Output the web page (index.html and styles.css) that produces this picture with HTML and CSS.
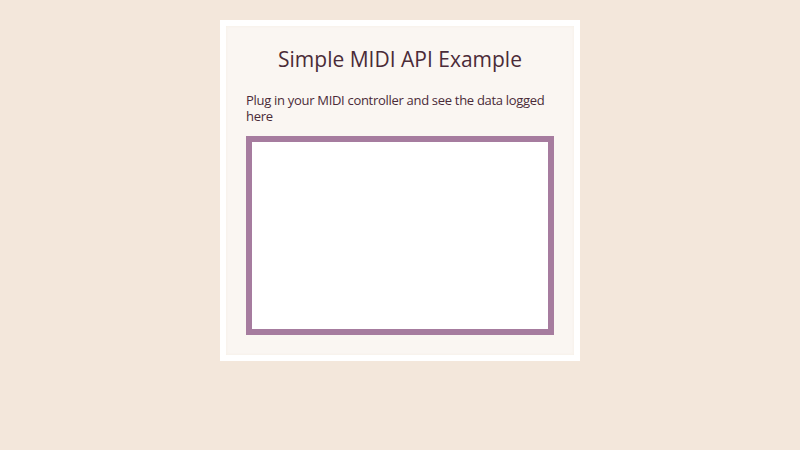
FILE: index.html
```html
<!DOCTYPE html>
<html lang="en">
<head>
    <meta charset="UTF-8">
    <meta name="viewport" content="width=device-width, initial-scale=1.0">
    <title>Simple MIDI API Example</title>
    <link rel="stylesheet" href="styles.css">
</head>
<body>
    <div class="wrapper">
        <h1>Simple MIDI API Example</h1>
        <p>Plug in your MIDI controller and see the data logged here</p>
        <div class="output" id="output"></div>
    </div>
</body>
</html>
```

FILE: styles.css
```css
body {
    font-family: "Open Sans", Arial, sans-serif;
    background-color: #f3e7db;
    color: #4a2b38;
    margin: 0;
    padding-top: 20px;
}

.wrapper {
    width: 308px;
    margin: 0 auto;
    padding: 20px;
    background-color: #faf6f2;
    border: 6px solid #fff;
    box-shadow: inset 0 0 3px rgba(243, 234, 224, 0.7);
}

h1 {
    font-size: 21px;
    font-weight: normal;
    line-height: 26px;
    text-align: center;
    margin: 0 0 20px;
}

p {
    font-size: 13px;
    line-height: 16px;
    letter-spacing: -0.3px;
    margin: 0 0 12px;
}

.output {
    height: 187px;
    background-color: #fff;
    border: 6px solid #a67c9f;
}
```
